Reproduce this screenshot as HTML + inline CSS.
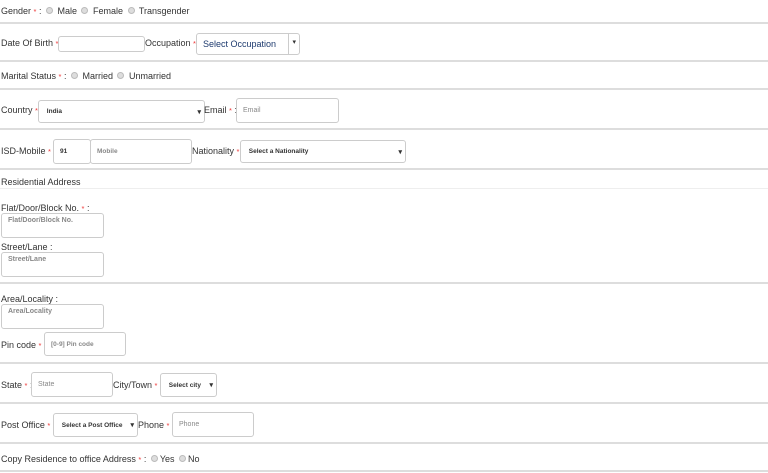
<!DOCTYPE html>
<html><head><style>
body{margin:0;width:768px;height:473px;background:#fff;font-family:"Liberation Sans",sans-serif;font-size:9px;color:#333;position:relative;overflow:hidden}
.a{position:absolute;white-space:nowrap}
.l{font-size:9px}
.r{color:#e33;font-size:7.5px}
.hr{position:absolute;left:0;width:768px;height:2px;background:#ddd}
.box{position:absolute;border:1px solid #ccc;border-radius:3px;background:#fff;box-sizing:border-box;font-size:7px;color:#888;padding-left:6px;display:flex;align-items:center}
.sel{color:#333;font-weight:bold;font-size:6.5px}
.ar{position:absolute;right:3px;top:50%;transform:translateY(-50%);font-size:7px;color:#333}
.rad{display:inline-block;width:7px;height:7px;border-radius:50%;background:#ddd;border:1px solid #bbb;box-sizing:border-box;vertical-align:0px;margin:0 2px}
.ta{align-items:flex-start;padding-top:3px;font-weight:bold;font-size:7px}
</style></head><body>
<div class="a l" style="left:1px;top:6px">Gender <span class="r">*</span> : <span class="rad"></span> Male <span class="rad"></span> Female <span class="rad"></span> Transgender</div>
<div class="hr" style="top:22px"></div>
<div class="a l" style="left:1px;top:38px">Date Of Birth <span class="r">*</span>:</div>
<div class="box" style="left:58px;top:36px;width:87px;height:16px"></div>
<div class="a l" style="left:145px;top:38px">Occupation <span class="r">*</span>:</div>
<div class="box" style="left:196px;top:33px;width:104px;height:22px;color:#1d3a6e;font-size:9px"> Select Occupation<span style="position:absolute;left:91px;top:0;bottom:0;border-left:1px solid #ccc"></span><span class="ar" style="top:40%">▾</span></div>
<div class="hr" style="top:60px"></div>
<div class="a l" style="left:1px;top:71px">Marital Status <span class="r">*</span> : <span class="rad"></span> Married <span class="rad"></span> Unmarried</div>
<div class="hr" style="top:88px"></div>
<div class="a l" style="left:1px;top:105px">Country <span class="r">*</span>:</div>
<div class="box sel" style="left:38px;top:100px;width:167px;height:23px">&nbsp;India<span class="ar">▾</span></div>
<div class="a l" style="left:204px;top:105px">Email <span class="r">*</span> :</div>
<div class="box" style="left:236px;top:98px;width:103px;height:25px">Email</div>
<div class="hr" style="top:128px"></div>
<div class="a l" style="left:1px;top:146px">ISD-Mobile <span class="r">*</span> :</div>
<div class="box sel" style="left:53px;top:139px;width:38px;height:25px">91</div>
<div class="box sel" style="left:90px;top:139px;width:102px;height:25px;color:#888">Mobile</div>
<div class="a l" style="left:192px;top:146px">Nationality <span class="r">*</span>:</div>
<div class="box sel" style="left:240px;top:140px;width:166px;height:23px">&nbsp;Select a Nationality<span class="ar">▾</span></div>
<div class="hr" style="top:168px"></div>
<div class="a l" style="left:1px;top:177px">Residential Address</div>
<div class="hr" style="top:188px;height:1px;background:#eee"></div>
<div class="a l" style="left:1px;top:203px">Flat/Door/Block No. <span class="r">*</span> :</div>
<div class="box ta" style="left:1px;top:213px;width:103px;height:25px">Flat/Door/Block No.</div>
<div class="a l" style="left:1px;top:242px">Street/Lane :</div>
<div class="box ta" style="left:1px;top:252px;width:103px;height:25px">Street/Lane</div>
<div class="hr" style="top:282px"></div>
<div class="a l" style="left:1px;top:294px">Area/Locality :</div>
<div class="box ta" style="left:1px;top:304px;width:103px;height:25px">Area/Locality</div>
<div class="a l" style="left:1px;top:340px">Pin code <span class="r">*</span> :</div>
<div class="box sel" style="left:44px;top:332px;width:82px;height:24px;color:#888">[0-9] Pin code</div>
<div class="hr" style="top:362px"></div>
<div class="a l" style="left:1px;top:380px">State <span class="r">*</span> :</div>
<div class="box" style="left:31px;top:372px;width:82px;height:25px">State</div>
<div class="a l" style="left:113px;top:380px">City/Town <span class="r">*</span> :</div>
<div class="box sel" style="left:160px;top:373px;width:57px;height:24px">&nbsp;Select city<span class="ar">▾</span></div>
<div class="hr" style="top:402px"></div>
<div class="a l" style="left:1px;top:420px">Post Office <span class="r">*</span> :</div>
<div class="box sel" style="left:53px;top:413px;width:85px;height:24px">&nbsp;Select a Post Office<span class="ar">▾</span></div>
<div class="a l" style="left:138px;top:420px">Phone <span class="r">*</span> :</div>
<div class="box" style="left:172px;top:412px;width:82px;height:25px">Phone</div>
<div class="hr" style="top:442px"></div>
<div class="a l" style="left:1px;top:454px">Copy Residence to office Address <span class="r">*</span> : <span class="rad"></span>Yes <span class="rad"></span>No</div>
<div class="hr" style="top:470px"></div>
</body></html>
